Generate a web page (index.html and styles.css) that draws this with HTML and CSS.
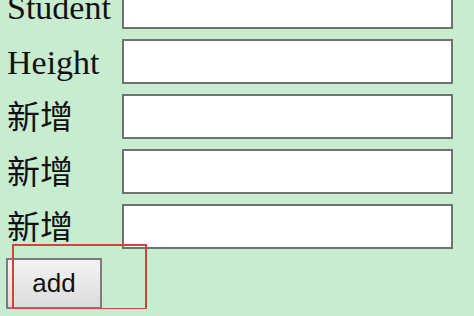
FILE: index.html
```html
<!DOCTYPE html>
<html>
<head>
<meta charset="utf-8">
<link rel="stylesheet" href="styles.css">
</head>
<body>
<form class="form">
  <div class="row"><label class="label">Student</label><input class="field" type="text"></div>
  <div class="row"><label class="label">Height</label><input class="field" type="text"></div>
  <div class="row"><label class="label cjk">新增</label><input class="field" type="text"></div>
  <div class="row"><label class="label cjk">新增</label><input class="field" type="text"></div>
  <div class="row"><label class="label cjk">新增</label><input class="field" type="text"></div>
  <div class="actions">
    <button class="btn" type="button">add</button>
    <div class="highlight"></div>
  </div>
</form>
</body>
</html>
```
FILE: styles.css
```css
html, body {
  margin: 0;
  padding: 0;
  background: #c8ecd0;
  overflow: hidden;
}
.form {
  margin: -16px 0 0 0;
  padding: 0 0 0 6px;
  display: flex;
  flex-direction: column;
  gap: 10px;
}
.row {
  display: flex;
  align-items: center;
  height: 45px;
}
.label {
  width: 116px;
  padding-left: 1px;
  box-sizing: border-box;
  font-family: "Liberation Serif", "Noto Sans CJK SC", serif;
  font-size: 34px;
  line-height: 39px;
  color: #111;
  position: relative;
  top: 1px;
}
.label.cjk {
  font-family: "Noto Sans CJK SC", sans-serif;
  font-size: 33px;
  font-weight: 400;
  line-height: 39px;
  top: -1px;
}
.field {
  width: 331px;
  height: 45px;
  box-sizing: border-box;
  margin: 0;
  border: 2px solid #6f736f;
  background: #fff;
  padding: 0 4px;
}
.actions {
  position: relative;
  margin-top: -1px;
}
.btn {
  width: 96px;
  height: 51px;
  box-sizing: border-box;
  margin: 0;
  border: 2px solid #7b7d7b;
  background: linear-gradient(#f3f3f3, #dcdcdc);
  font-family: "Liberation Sans", Arial, sans-serif;
  font-size: 26px;
  color: #111;
  padding: 0;
}
.highlight {
  position: absolute;
  left: 6px;
  top: -14px;
  width: 135px;
  height: 66px;
  box-sizing: border-box;
  border: 2px solid #e03c3c;
  pointer-events: none;
}
```
